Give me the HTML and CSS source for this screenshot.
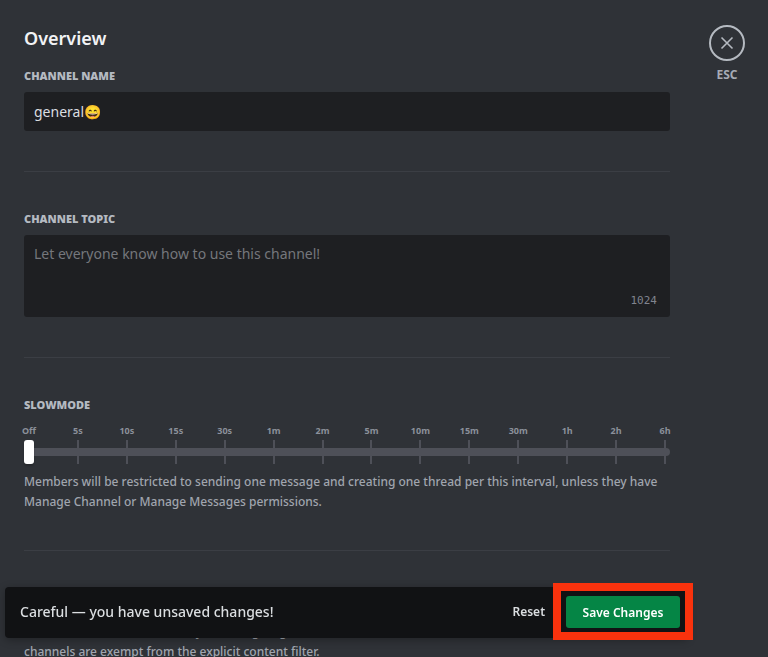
FILE: index.html
```html
<!DOCTYPE html>
<html lang="en">
<head>
<meta charset="utf-8">
<meta name="viewport" content="width=device-width, initial-scale=1">
<title>Channel settings</title>
<link rel="stylesheet" href="styles.css">
</head>
<body>
<div class="layout">
  <main class="content">
    <h1 class="title">Overview</h1>
    <section class="section">
      <label class="label" for="name">Channel name</label>
      <input class="field name" id="name" type="text" value="general😄">
    </section>
    <section class="section">
      <label class="label" for="topic">Channel topic</label>
      <div class="topic-box">
        <textarea class="field topic" id="topic" placeholder="Let everyone know how to use this channel!"></textarea>
        <span class="count">1024</span>
      </div>
    </section>
    <section class="section slow">
      <label class="label" for="slowmode">Slowmode</label>
      <div class="slider">
        <div class="marks">
          <span class="mark">Off</span><span class="mark">5s</span><span class="mark">10s</span><span class="mark">15s</span><span class="mark">30s</span><span class="mark">1m</span><span class="mark">2m</span><span class="mark">5m</span><span class="mark">10m</span><span class="mark">15m</span><span class="mark">30m</span><span class="mark">1h</span><span class="mark">2h</span><span class="mark">6h</span>
        </div>
        <input class="range" id="slowmode" type="range" min="0" max="13" step="1" value="0">
      </div>
      <p class="note">Members will be restricted to sending one message and creating one thread per this interval, unless they have Manage Channel or Manage Messages permissions.</p>
    </section>
    <section class="section last">
      <p class="note">Users will need to confirm they are of legal age to view the content in this<br>channels are exempt from the explicit content filter.</p>
    </section>
  </main>
  <aside class="close">
    <button class="close-button" type="button" aria-label="Close">
      <svg viewBox="0 0 36 36" width="36" height="36" fill="none" stroke="currentColor"><circle cx="18" cy="18" r="17" stroke-width="2"/><path d="M12.5 12.5l11 11M23.5 12.5l-11 11" stroke-width="1.6"/></svg>
    </button>
    <span class="esc">ESC</span>
  </aside>
</div>
<div class="notice">
  <span class="message">Careful — you have unsaved changes!</span>
  <button class="reset" type="button">Reset</button>
  <div class="highlight"><button class="save" type="button">Save Changes</button></div>
</div>
</body>
</html>
```
FILE: styles.css
```css
* { box-sizing: border-box; }
body {
  margin: 0;
  height: 100vh;
  overflow: hidden;
  background: #2f3237;
  color: #b5bac1;
  font-family: "Noto Sans", sans-serif;
}
button, input, textarea { font-family: inherit; }
.layout { display: flex; }
.content { flex: 1; min-width: 0; padding: 26px 0 0 24px; }
.title { margin: 0; font-size: 18px; line-height: 24px; font-weight: 600; color: #f2f3f5; }
.section {
  display: flex;
  flex-direction: column;
  margin-bottom: 39px;
  padding-bottom: 40px;
  border-bottom: 1px solid #3b3e44;
}
.title + .section { margin-top: 18px; }
.label {
  font-size: 11px;
  line-height: 16px;
  font-weight: 900;
  text-transform: uppercase;
  margin-bottom: 8px;
}
.field {
  display: block;
  width: 100%;
  border: 0;
  border-radius: 3px;
  padding: 8px 10px;
  background: #1e1f22;
  color: #dbdee1;
  font-size: 14px;
  line-height: 22px;
  outline: 0;
}
.name { height: 39px; }
.topic-box { position: relative; }
.topic { height: 82px; resize: none; }
.topic::placeholder { color: #75777c; opacity: 1; }
.count {
  position: absolute;
  right: 13px;
  bottom: 9px;
  font: 11px/14px "DejaVu Sans Mono", monospace;
  color: #80848e;
}
.slider { position: relative; height: 51px; padding-top: 4px; }
.marks { display: flex; justify-content: space-between; padding: 0 4px; }
.mark {
  display: flex;
  flex-direction: column;
  align-items: center;
  width: 2px;
  font-size: 9px;
  line-height: 12px;
  font-weight: 700;
  color: #8b909a;
}
.mark::after { content: ""; width: 2px; height: 24px; margin-top: 3px; background: #4e5058; }
.mark:first-child::after { visibility: hidden; }
.range {
  position: absolute;
  left: 0;
  bottom: 8px;
  width: 100%;
  height: 24px;
  margin: 0;
  appearance: none;
  background: none;
}
.range::-webkit-slider-runnable-track { height: 8px; border-radius: 4px; background: #4e5058; }
.range::-webkit-slider-thumb {
  appearance: none;
  width: 10px;
  height: 24px;
  margin-top: -8px;
  border-radius: 3px;
  background: #fff;
  box-shadow: 0 2px 2px rgba(0, 0, 0, .2);
}
.note { margin: 0; font-size: 12px; line-height: 20px; font-weight: 500; color: #a0a5ae; }
.slow { padding-bottom: 38px; }
.last { border: 0; margin: 0; padding: 32px 0 0; }
.close {
  flex: 0 0 98px;
  display: flex;
  flex-direction: column;
  align-items: center;
  padding: 25px 0 0 16px;
}
.close-button { padding: 0; border: 0; background: none; color: #b5bac1; height: 36px; }
.close-button svg { display: block; }
.esc { margin-top: 6px; font-size: 12px; line-height: 16px; font-weight: 700; color: #a6abb4; }
.notice {
  position: fixed;
  left: 5px;
  right: 75px;
  bottom: 17px;
  display: flex;
  align-items: center;
  height: 57px;
  padding-left: 15px;
}
.notice::before {
  content: "";
  position: absolute;
  z-index: -1;
  inset: 4px 5px 2px 0;
  border-radius: 4px;
  background: #111214;
  box-shadow: 0 2px 8px rgba(0, 0, 0, .3);
}
.message { flex: 1; font-size: 14px; font-weight: 500; color: #dbdee1; }
.reset { border: 0; padding: 0 8px; background: none; color: #dbdee1; font-size: 12px; font-weight: 600; }
.highlight { padding: 5px 5px 4px; border: 8px solid #f9320d; background: #111214; }
.save {
  display: block;
  width: 114px;
  height: 32px;
  padding: 0;
  border: 0;
  border-radius: 3px;
  background: #058545;
  color: #fff;
  font-size: 12px;
  font-weight: 600;
}
```
